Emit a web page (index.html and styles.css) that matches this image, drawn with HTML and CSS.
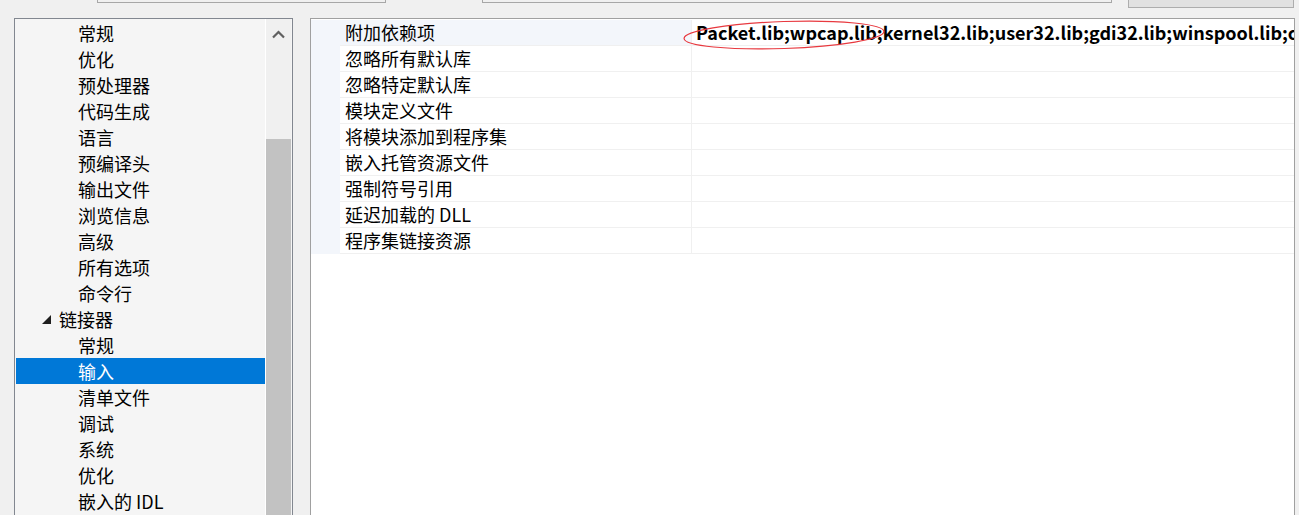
FILE: index.html
```html
<!DOCTYPE html>
<html lang="zh-CN">
<head>
<meta charset="utf-8">
<title>属性页</title>
<link rel="stylesheet" href="styles.css">
</head>
<body>
<div class="topbar">
  <div class="field field-a"></div>
  <div class="field field-b"></div>
  <div class="button"></div>
</div>
<div class="main">
  <div class="tree">
    <ul class="list">
      <li class="item child">常规</li>
      <li class="item child">优化</li>
      <li class="item child">预处理器</li>
      <li class="item child">代码生成</li>
      <li class="item child">语言</li>
      <li class="item child">预编译头</li>
      <li class="item child">输出文件</li>
      <li class="item child">浏览信息</li>
      <li class="item child">高级</li>
      <li class="item child">所有选项</li>
      <li class="item child">命令行</li>
      <li class="item parent"><svg class="expander" width="10" height="10" viewBox="0 0 10 10"><polygon points="9,0 9,9 0,9" fill="#1e1e1e"/></svg>链接器</li>
      <li class="item child">常规</li>
      <li class="item child selected">输入</li>
      <li class="item child">清单文件</li>
      <li class="item child">调试</li>
      <li class="item child">系统</li>
      <li class="item child">优化</li>
      <li class="item child">嵌入的 IDL</li>
    </ul>
    <div class="scrollbar">
      <div class="arrow"><svg width="13" height="9" viewBox="0 0 13 9"><polyline points="1,7.5 6.5,2 12,7.5" fill="none" stroke="#606060" stroke-width="2.2"/></svg></div>
      <div class="track"></div>
      <div class="thumb"></div>
    </div>
  </div>
  <div class="grid">
    <div class="row current"><div class="gutter"></div><div class="name">附加依赖项</div><div class="value">Packet.lib;wpcap.lib;kernel32.lib;user32.lib;gdi32.lib;winspool.lib;comdlg32.lib;advapi32.lib</div></div>
    <div class="row"><div class="gutter"></div><div class="name">忽略所有默认库</div><div class="value"></div></div>
    <div class="row"><div class="gutter"></div><div class="name">忽略特定默认库</div><div class="value"></div></div>
    <div class="row"><div class="gutter"></div><div class="name">模块定义文件</div><div class="value"></div></div>
    <div class="row"><div class="gutter"></div><div class="name">将模块添加到程序集</div><div class="value"></div></div>
    <div class="row"><div class="gutter"></div><div class="name">嵌入托管资源文件</div><div class="value"></div></div>
    <div class="row"><div class="gutter"></div><div class="name">强制符号引用</div><div class="value"></div></div>
    <div class="row"><div class="gutter"></div><div class="name">延迟加载的 DLL</div><div class="value"></div></div>
    <div class="row"><div class="gutter"></div><div class="name">程序集链接资源</div><div class="value"></div></div>
    <svg class="mark" width="210" height="40" viewBox="0 0 210 40"><ellipse cx="104" cy="18" rx="100" ry="13.5" transform="rotate(-2 104 18)" fill="none" stroke="#e8393f" stroke-width="1.2"/></svg>
  </div>
</div>
</body>
</html>
```

FILE: styles.css
```css
* { box-sizing: border-box; }
html, body { margin: 0; padding: 0; }
body {
  background: #f0f0f0;
  width: 1299px;
  height: 515px;
  overflow: hidden;
  font-family: "Noto Sans CJK SC", "Noto Sans", sans-serif;
  font-size: 18px;
  color: #000;
}
.topbar {
  height: 18px;
  display: flex;
  align-items: flex-start;
}
.field {
  height: 3px;
  border: 1px solid #a7a7a7;
  border-top: none;
  background: #f0f0f0;
}
.field-a { margin-left: 97px; width: 289px; }
.field-b { margin-left: 96px; width: 630px; }
.button {
  margin-left: 16px;
  width: 166px;
  height: 8px;
  border: 1px solid #adadad;
  border-top: none;
  background: #e1e1e1;
}
.main {
  display: flex;
  align-items: flex-start;
  padding-left: 14px;
  gap: 17px;
}
.tree {
  width: 279px;
  height: 520px;
  border: 1px solid #828790;
  background: #f5f5f5;
  display: flex;
}
.list {
  list-style: none;
  margin: 0;
  padding: 1px 0 0 0;
  width: 250px;
}
.item {
  height: 26px;
  line-height: 26px;
  white-space: nowrap;
  display: flex;
  align-items: center;
}
.child { padding-left: 63px; }
.parent { padding-left: 27px; }
.expander { margin-right: 7px; margin-top: 2px; }
.selected {
  background: #0078d7;
  color: #fff;
  margin-left: 1px;
  padding-left: 62px;
}
.scrollbar {
  width: 26px;
  border-left: 1px solid #ffffff;
  background: #f0f0f0;
  display: flex;
  flex-direction: column;
  margin-right: 1px;
}
.arrow {
  height: 26px;
  display: flex;
  justify-content: center;
  align-items: flex-end;
  padding-bottom: 6px;
}
.track { height: 94px; }
.thumb { flex: 1; background: #c2c2c2; }
.grid {
  position: relative;
  width: 985px;
  height: 520px;
  border: 1px solid #a0a0a0;
  background: #fff;
  padding-top: 1px;
}
.row {
  display: flex;
  height: 26px;
}
.gutter {
  width: 29px;
  background: #f3f6fb;
}
.name {
  width: 352px;
  padding-left: 5px;
  line-height: 25px;
  border-bottom: 1px solid #f0f0f0;
  border-right: 1px solid #f0f0f0;
  white-space: nowrap;
}
.current .name { background: #f3f6fb; }
.value {
  flex: 1;
  min-width: 0;
  overflow: hidden;
  white-space: nowrap;
  padding-left: 4px;
  line-height: 25px;
  border-bottom: 1px solid #f0f0f0;
  font-weight: bold;
}
.mark {
  position: absolute;
  left: 369px;
  top: -2px;
  pointer-events: none;
}
```
